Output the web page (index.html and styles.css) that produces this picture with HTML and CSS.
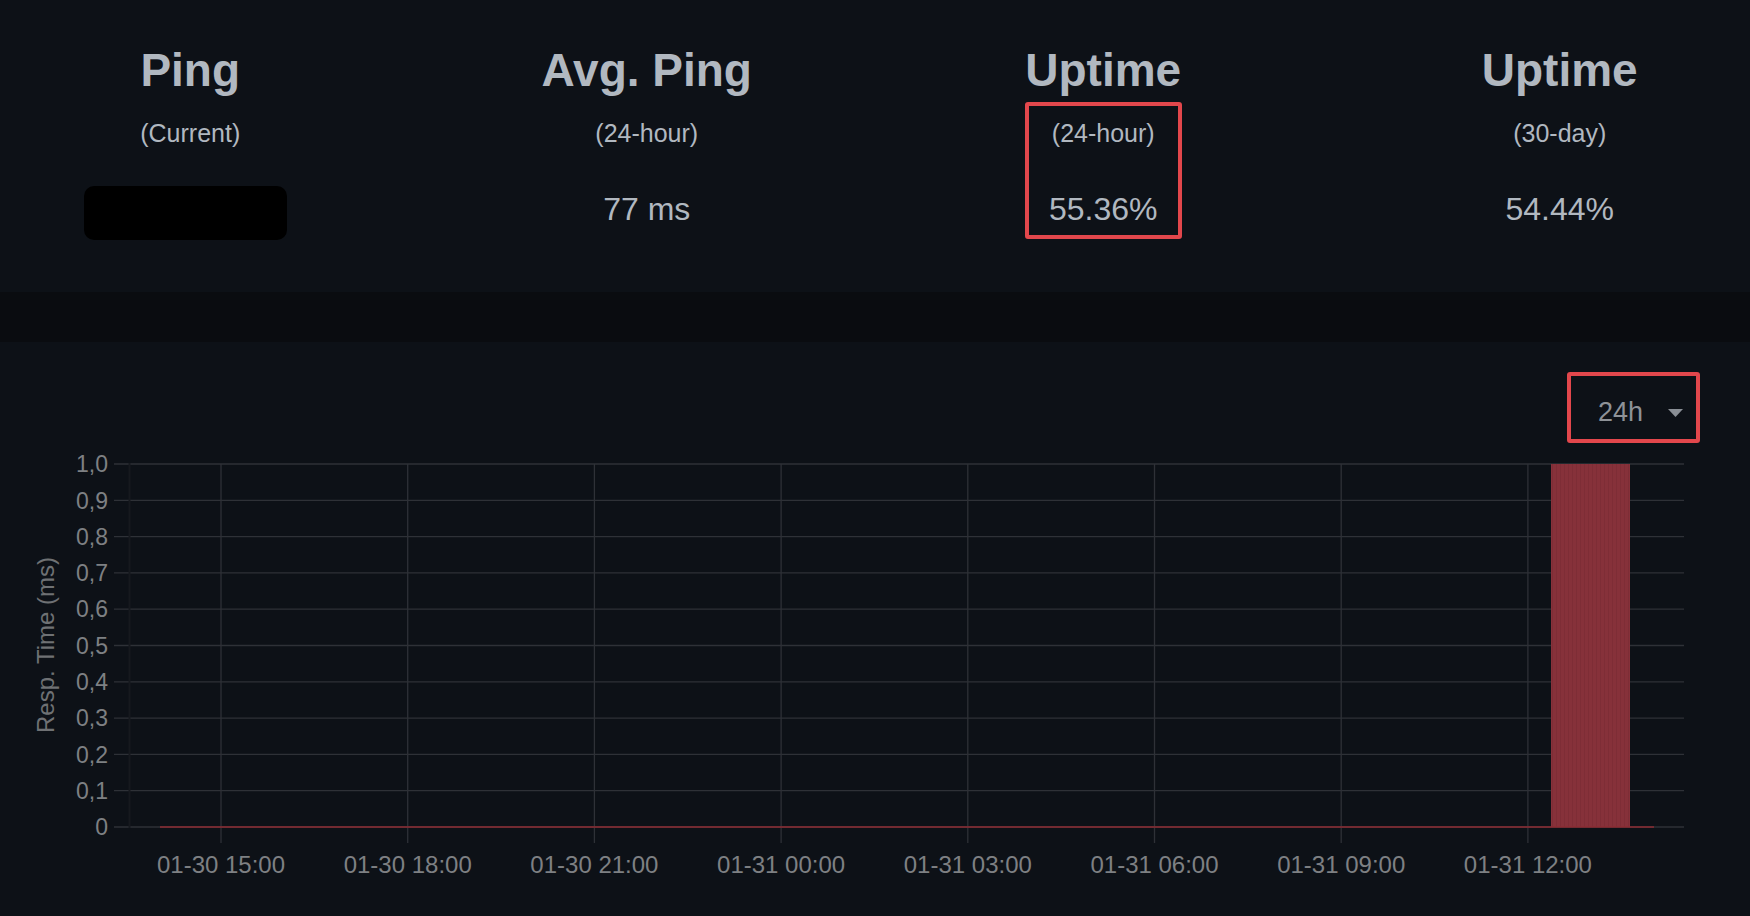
FILE: index.html
```html
<!DOCTYPE html>
<html lang="en">
<head>
<meta charset="utf-8">
<title>Monitor</title>
<link rel="stylesheet" href="styles.css">
</head>
<body>
<section class="stats">
  <div class="stat">
    <h4 class="stat-title">Ping</h4>
    <div class="stat-body">
      <div class="stat-sub">(Current)</div>
      <div class="redacted"></div>
    </div>
  </div>
  <div class="stat">
    <h4 class="stat-title">Avg. Ping</h4>
    <div class="stat-body">
      <div class="stat-sub">(24-hour)</div>
      <div class="stat-value">77 ms</div>
    </div>
  </div>
  <div class="stat">
    <h4 class="stat-title">Uptime</h4>
    <div class="stat-body marked">
      <div class="stat-sub">(24-hour)</div>
      <div class="stat-value">55.36%</div>
    </div>
  </div>
  <div class="stat">
    <h4 class="stat-title">Uptime</h4>
    <div class="stat-body">
      <div class="stat-sub">(30-day)</div>
      <div class="stat-value">54.44%</div>
    </div>
  </div>
</section>
<div class="band"></div>
<section class="chart-section">
  <div class="chart-toolbar">
    <div class="period marked">
      <span class="period-label">24h</span>
      <svg class="caret" width="15" height="8" viewBox="0 0 15 8"><path d="M0 0 L15 0 L7.5 8 Z" fill="#8a8f96"/></svg>
    </div>
  </div>
  <svg class="chart" width="1750" height="473" viewBox="0 0 1750 473">
    <defs>
      <pattern id="stripes" width="4" height="10" patternUnits="userSpaceOnUse">
        <rect width="4" height="10" fill="#86313a"/>
        <rect width="1" height="10" fill="#7e2d36"/>
      </pattern>
    </defs>
    <g stroke="#2e3137" stroke-width="1.3">
      <line x1="114" y1="21" x2="1684" y2="21"/>
      <line x1="114" y1="57.3" x2="1684" y2="57.3"/>
      <line x1="114" y1="93.6" x2="1684" y2="93.6"/>
      <line x1="114" y1="129.9" x2="1684" y2="129.9"/>
      <line x1="114" y1="166.2" x2="1684" y2="166.2"/>
      <line x1="114" y1="202.5" x2="1684" y2="202.5"/>
      <line x1="114" y1="238.8" x2="1684" y2="238.8"/>
      <line x1="114" y1="275.1" x2="1684" y2="275.1"/>
      <line x1="114" y1="311.4" x2="1684" y2="311.4"/>
      <line x1="114" y1="347.7" x2="1684" y2="347.7"/>
      <line x1="114" y1="384" x2="1684" y2="384"/>
      <line x1="221" y1="21" x2="221" y2="400"/>
      <line x1="407.7" y1="21" x2="407.7" y2="400"/>
      <line x1="594.4" y1="21" x2="594.4" y2="400"/>
      <line x1="781.1" y1="21" x2="781.1" y2="400"/>
      <line x1="967.8" y1="21" x2="967.8" y2="400"/>
      <line x1="1154.5" y1="21" x2="1154.5" y2="400"/>
      <line x1="1341.2" y1="21" x2="1341.2" y2="400"/>
      <line x1="1527.9" y1="21" x2="1527.9" y2="400"/>
    </g>
    <line x1="129.5" y1="20" x2="129.5" y2="385" stroke="#16191e" stroke-width="2"/>
    <rect x="1551" y="21" width="79" height="363" fill="url(#stripes)"/>
    <line x1="160" y1="384" x2="1654" y2="384" stroke="#8c2b33" stroke-width="1.5"/>
    <g class="ytick" text-anchor="end">
      <text x="108" y="29.2">1,0</text>
      <text x="108" y="65.5">0,9</text>
      <text x="108" y="101.8">0,8</text>
      <text x="108" y="138.1">0,7</text>
      <text x="108" y="174.4">0,6</text>
      <text x="108" y="210.7">0,5</text>
      <text x="108" y="247">0,4</text>
      <text x="108" y="283.3">0,3</text>
      <text x="108" y="319.6">0,2</text>
      <text x="108" y="355.9">0,1</text>
      <text x="108" y="392.2">0</text>
    </g>
    <text class="ytitle" x="0" y="0" text-anchor="middle" transform="translate(54 202) rotate(-90)">Resp. Time (ms)</text>
    <g class="xtick" text-anchor="middle">
      <text x="221" y="430">01-30 15:00</text>
      <text x="407.7" y="430">01-30 18:00</text>
      <text x="594.4" y="430">01-30 21:00</text>
      <text x="781.1" y="430">01-31 00:00</text>
      <text x="967.8" y="430">01-31 03:00</text>
      <text x="1154.5" y="430">01-31 06:00</text>
      <text x="1341.2" y="430">01-31 09:00</text>
      <text x="1527.9" y="430">01-31 12:00</text>
    </g>
  </svg>
</section>
</body>
</html>
```
FILE: styles.css
```css
* { box-sizing: border-box; }
html, body {
  margin: 0;
  padding: 0;
  background: #0d1117;
  font-family: "Liberation Sans", Arial, Helvetica, sans-serif;
  color: #b1b8c0;
}
body {
  width: 1750px;
  height: 916px;
  overflow: hidden;
}
.stats {
  height: 292px;
  display: grid;
  grid-template-columns: repeat(4, 1fr);
  column-gap: 80px;
  padding: 0 2px;
}
.stat {
  display: flex;
  flex-direction: column;
  align-items: center;
  text-align: center;
}
.stat-title {
  margin: 42px 0 0;
  font-size: 46px;
  line-height: 56px;
  font-weight: 700;
  color: #b1b8c0;
}
.stat-body {
  margin-top: 4px;
  border: 4px solid transparent;
  border-radius: 3px;
  padding: 12px 20px 6px;
  display: flex;
  flex-direction: column;
  align-items: center;
}
.stat-body.marked,
.period.marked {
  border-color: #e2474c;
}
.stat-sub {
  font-size: 25px;
  line-height: 30px;
  color: #b1b8c0;
}
.stat-value {
  margin-top: 41px;
  font-size: 32px;
  line-height: 40px;
  color: #b1b8c0;
}
.redacted {
  margin: 38px 9px 0 0;
  width: 203px;
  height: 54px;
  border-radius: 10px;
  background: #000;
}
.band {
  height: 50px;
  background: #0a0c10;
}
.chart-section {
  height: 574px;
  padding-top: 30px;
}
.chart-toolbar {
  display: flex;
  justify-content: flex-end;
  padding-right: 50px;
  height: 71px;
}
.period {
  width: 133px;
  height: 71px;
  border: 4px solid transparent;
  border-radius: 3px;
  padding: 19px 13px 10px 27px;
  display: flex;
  align-items: center;
  justify-content: space-between;
}
.period-label {
  font-size: 27px;
  line-height: 34px;
  color: #8e9297;
}
.caret {
  display: block;
  margin-top: 2px;
}
.chart {
  display: block;
}
.ytick text,
.xtick text,
.ytitle {
  font-family: "Liberation Sans", Arial, Helvetica, sans-serif;
  fill: #7e8083;
}
.ytick text { font-size: 23px; }
.xtick text { font-size: 24px; }
.ytitle { font-size: 24px; fill: #6f7174; }
```
